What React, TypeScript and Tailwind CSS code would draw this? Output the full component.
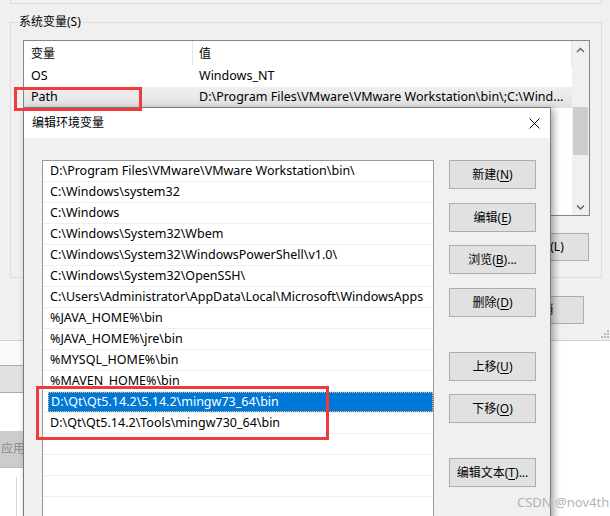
import React from "react";

const paths = [
  "D:\\Program Files\\VMware\\VMware Workstation\\bin\\",
  "C:\\Windows\\system32",
  "C:\\Windows",
  "C:\\Windows\\System32\\Wbem",
  "C:\\Windows\\System32\\WindowsPowerShell\\v1.0\\",
  "C:\\Windows\\System32\\OpenSSH\\",
  "C:\\Users\\Administrator\\AppData\\Local\\Microsoft\\WindowsApps",
  "%JAVA_HOME%\\bin",
  "%JAVA_HOME%\\jre\\bin",
  "%MYSQL_HOME%\\bin",
  "%MAVEN_HOME%\\bin",
  "D:\\Qt\\Qt5.14.2\\5.14.2\\mingw73_64\\bin",
  "D:\\Qt\\Qt5.14.2\\Tools\\mingw730_64\\bin",
];

const SELECTED = 11;

function Chevron({ down }: { down?: boolean }) {
  return (
    <svg width="9" height="6" viewBox="0 0 9 6">
      <polyline
        points={down ? "1,1.5 4.5,5 8,1.5" : "1,5 4.5,1.5 8,5"}
        fill="none"
        stroke="#606060"
        strokeWidth="1.3"
      />
    </svg>
  );
}

function WinButton({
  label,
  hotkey,
  tail = "",
  className = "",
}: {
  label: string;
  hotkey: string;
  tail?: string;
  className?: string;
}) {
  return (
    <div
      className={`w-[87px] h-[29px] shrink-0 bg-[#e1e1e1] border border-[#adadad] flex items-center justify-center whitespace-nowrap ${className}`}
    >
      {label}(<span className="underline underline-offset-2">{hotkey}</span>){tail}
    </div>
  );
}

export default function App() {
  return (
    <div className="relative w-[610px] h-[516px] overflow-hidden bg-white text-[12px] text-black font-['Noto_Sans','Noto_Sans_CJK_SC',sans-serif]">
      {/* Environment variables window behind */}
      <div className="relative h-[341px] bg-[#f0f0f0] border-b border-[#cfcfcf] flex flex-col">
        <div className="ml-[10px] w-[592px] h-[4px] shrink-0 border-x border-b border-[#dcdcdc]" />

        <div className="relative ml-[10px] mt-[18px] w-[592px] h-[256px] shrink-0 border border-[#dcdcdc] pl-[12px] pt-[17px]">
          <span className="absolute left-[6px] -top-[9px] px-[2px] bg-[#f0f0f0] leading-[16px]">
            系统变量(S)
          </span>

          <div className="w-[567px] h-[176px] border border-[#828790] bg-white flex">
            <div className="flex-1 flex flex-col min-w-0 text-[12.5px]">
              <div className="h-[25px] shrink-0 flex text-[12px]">
                <div className="w-[169px] border-r border-[#e5e5e5] pl-[7px] flex items-center">
                  变量
                </div>
                <div className="flex-1 pl-[6px] flex items-center border-r border-[#e5e5e5]">
                  值
                </div>
              </div>
              <div className="h-[21px] shrink-0 flex items-center">
                <div className="w-[169px] pl-[7px]">OS</div>
                <div className="flex-1 pl-[6px]">Windows_NT</div>
              </div>
              <div className="h-[21px] shrink-0 flex items-center bg-linear-to-b from-[#efefef] to-[#e1e1e1]">
                <div className="w-[169px] pl-[7px]">Path</div>
                <div className="flex-1 pl-[6px] whitespace-nowrap overflow-hidden">
                  D:\Program Files\VMware\VMware Workstation\bin\;C:\Wind...
                </div>
              </div>
            </div>
            <div className="w-[17px] bg-[#f0f0f0] flex flex-col">
              <div className="h-[17px] shrink-0 flex items-center justify-center">
                <Chevron />
              </div>
              <div className="flex-1">
                <div className="mt-[49px] mx-[1px] h-[48px] bg-[#cdcdcd]" />
              </div>
              <div className="h-[17px] shrink-0 flex items-center justify-center">
                <Chevron down />
              </div>
            </div>
          </div>

          <div className="mt-[17px] flex justify-end pr-[12px]">
            <div className="w-[88px] h-[28px] bg-[#e1e1e1] border border-[#adadad] flex items-center justify-center">
              删除(L)
            </div>
          </div>
        </div>

        <div className="mt-[18px] flex justify-end gap-[8px] pr-[26px]">
          <div className="w-[85px] h-[28px] bg-[#e1e1e1] border border-[#adadad] flex items-center justify-center">
            确定
          </div>
          <div className="w-[85px] h-[28px] bg-[#e1e1e1] border border-[#adadad] flex items-center justify-center">
            取消
          </div>
        </div>

        <svg
          className="absolute right-[1px] bottom-[2px]"
          width="9"
          height="9"
          viewBox="0 0 9 9"
        >
          {[
            [7, 1],
            [4, 4],
            [7, 4],
            [1, 7],
            [4, 7],
            [7, 7],
          ].map(([x, y]) => (
            <rect key={`${x}-${y}`} x={x} y={y} width="2" height="2" fill="#b8b8b8" />
          ))}
        </svg>
      </div>

      {/* Window further behind, visible at the left edge */}
      <div className="flex">
        <div className="w-[23px] flex flex-col overflow-hidden">
          <div className="h-[24px] bg-[#f9f9f9]" />
          <div className="h-[28px] bg-[#e1e1e1] border-y border-[#adadad] flex items-end pb-[5px] whitespace-nowrap">
            <span className="-ml-[9px]">…</span>
          </div>
          <div className="h-[38px] bg-white" />
          <div className="h-[37px] bg-[#cccccc] border-b border-[#bdbdbd] flex items-center pl-[1px] text-[#8a8a8a] whitespace-nowrap">
            应用
          </div>
          <div className="h-[9px] bg-white" />
          <div className="h-[40px] ml-[16px] border-l border-[#d6d6d6]" />
        </div>
      </div>

      {/* Edit environment variable dialog */}
      <div className="absolute left-[23px] top-[107px] w-[528px] h-[450px] border border-[#7a7a7a] bg-[#f0f0f0] shadow-[3px_2px_7px_rgba(0,0,0,0.35)] flex flex-col">
        <div className="h-[30px] shrink-0 bg-white flex items-center justify-between pl-[8px] pr-[10px]">
          <span>编辑环境变量</span>
          <svg width="11" height="11" viewBox="0 0 11 11">
            <path d="M0.5 0.5 L10.5 10.5 M10.5 0.5 L0.5 10.5" stroke="#111" strokeWidth="1" />
          </svg>
        </div>

        <div className="shrink-0 flex pl-[18px] pt-[22px]">
          <div className="w-[392px] h-[380px] shrink-0 border border-[#9a9a9a] bg-white overflow-hidden text-[12.5px]">
            {Array.from({ length: 18 }).map((_, i) => {
              const text = paths[i];
              const selected = i === SELECTED;
              return (
                <div key={i} className="h-[21px] border-b border-[#efefef] pl-[5px]">
                  <div
                    className={
                      selected
                        ? "h-full pl-[3px] flex items-center whitespace-nowrap bg-[#0078d7] text-white outline-1 outline-dotted outline-[#f0b860] -outline-offset-1"
                        : "h-full pl-[2px] flex items-center whitespace-nowrap"
                    }
                  >
                    {text ?? ""}
                  </div>
                </div>
              );
            })}
          </div>

          <div className="ml-[15px] flex flex-col">
            <WinButton label="新建" hotkey="N" />
            <WinButton label="编辑" hotkey="E" className="mt-[14px]" />
            <WinButton label="浏览" hotkey="B" tail="..." className="mt-[13px]" />
            <WinButton label="删除" hotkey="D" className="mt-[14px]" />
            <WinButton label="上移" hotkey="U" className="mt-[35px]" />
            <WinButton label="下移" hotkey="O" className="mt-[13px]" />
            <WinButton label="编辑文本" hotkey="T" tail="..." className="mt-[35px]" />
          </div>
        </div>
      </div>

      {/* Annotation boxes */}
      <div className="absolute left-[14px] top-[87px] w-[128px] h-[24px] border-[3px] border-[#ef3b3b]" />
      <div className="absolute left-[36px] top-[386px] w-[293px] h-[54px] border-[3px] border-[#ef3b3b]" />

      <div className="absolute left-[517px] top-[494px] text-[13px] leading-[16px] text-[#b3b3b3]">
        CSDN @nov4th
      </div>
    </div>
  );
}
